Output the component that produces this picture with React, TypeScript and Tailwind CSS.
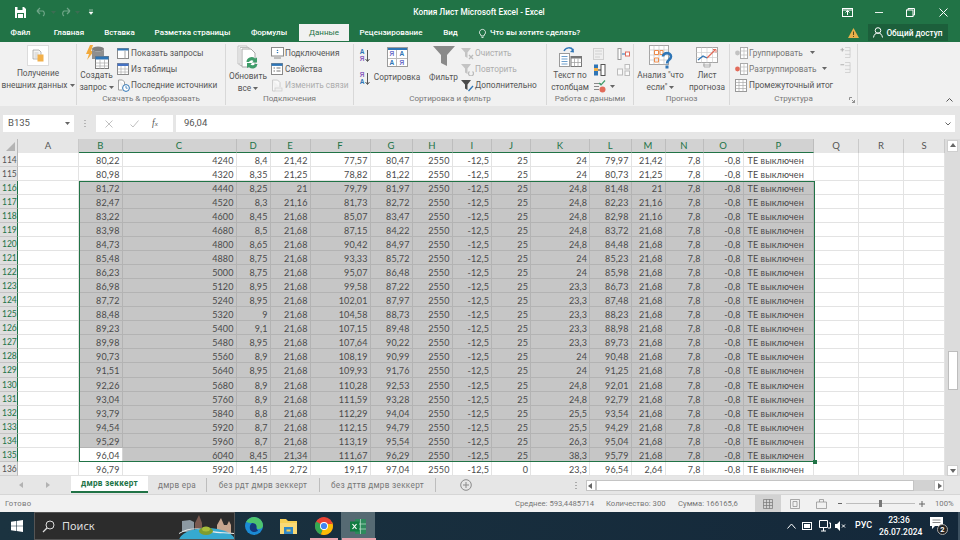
import React from "react";

const COLS = ["A","B","C","D","E","F","G","H","I","J","K","L","M","N","O","P","Q","R","S"];
const raw = `114 80,22 4240 8,4 21,42 77,57 80,47 24 79,97 21,42
115 80,98 4320 8,35 21,25 78,82 81,22 24 80,73 21,25
116 81,72 4440 8,25 21 79,79 81,97 24,8 81,48 21
117 82,47 4520 8,3 21,16 81,73 82,72 24,8 82,23 21,16
118 83,22 4600 8,45 21,68 85,07 83,47 24,8 82,98 21,16
119 83,98 4680 8,5 21,68 87,15 84,22 24,8 83,72 21,68
120 84,73 4800 8,65 21,68 90,42 84,97 24,8 84,48 21,68
121 85,48 4880 8,75 21,68 93,33 85,72 24 85,23 21,68
122 86,23 5000 8,75 21,68 95,07 86,48 24 85,98 21,68
123 86,98 5120 8,95 21,68 99,58 87,22 23,3 86,73 21,68
124 87,72 5240 8,95 21,68 102,01 87,97 23,3 87,48 21,68
125 88,48 5320 9 21,68 104,58 88,73 23,3 88,23 21,68
126 89,23 5400 9,1 21,68 107,15 89,48 23,3 88,98 21,68
127 89,98 5480 8,95 21,68 107,64 90,22 23,3 89,73 21,68
128 90,73 5560 8,9 21,68 108,19 90,99 24 90,48 21,68
129 91,51 5640 8,95 21,68 109,93 91,76 24 91,25 21,68
130 92,26 5680 8,9 21,68 110,28 92,53 24,8 92,01 21,68
131 93,04 5760 8,9 21,68 111,59 93,28 24,8 92,79 21,68
132 93,79 5840 8,8 21,68 112,29 94,04 25,5 93,54 21,68
133 94,54 5920 8,7 21,68 112,15 94,79 25,5 94,29 21,68
134 95,29 5960 8,7 21,68 113,19 95,54 26,3 95,04 21,68
135 96,04 6040 8,45 21,34 111,67 96,29 38,3 95,79 21,68
136 96,79 5920 1,45 2,72 19,17 97,04 23,3 96,54 2,64`;

const rows = raw.split("\n").map((l) => {
  const p = l.split(" ");
  const n = Number(p[0]);
  return {
    n,
    cells: ["", p[1], p[2], p[3], p[4], p[5], p[6], "2550", "-12,5", n === 136 ? "0" : "25", p[7], p[8], p[9], "7,8", "-0,8", "TE выключен", "", "", ""],
  };
});

const Cell = ({ text, sel, active, col }: { text: string; sel: boolean; active: boolean; col: string }) => (
  <div
    className={`overflow-hidden border-r border-b pr-[2px] text-[9px] leading-[15px] tracking-[0.1px] text-[#4a4a4a] [font-family:'Lato',sans-serif] ${col === "P" ? "pl-[4px] text-left whitespace-nowrap" : "text-right"} ${
      active ? "border-[#d4d4d4] bg-white" : sel ? "border-[#b3b3b3] bg-[#c6c6c6]" : "border-[#e3e3e3] bg-white"
    }`}
  >
    {text}
  </div>
);

function Sheet() {
  return (
    <div className="relative grid flex-1 grid-cols-[18px_61px_43.5px_114px_34px_40px_60px_42px_40px_39.5px_39px_59px_41.5px_34px_38px_40px_70.5px_45px_45px_41px] grid-rows-[14px] auto-rows-[14.04px]">
      <div className="flex items-end justify-end border-r border-[#b9b9b9] bg-[#e6e6e6] pr-[2px] pb-[2px]">
        <svg width="9" height="9" viewBox="0 0 9 9"><path d="M9 0v9H0z" fill="#b4b4b4" /></svg>
      </div>
      {COLS.map((c) => {
        const s = c !== "A" && c !== "Q" && c !== "R" && c !== "S";
        return (
          <div
            key={c}
            className={`border-r text-center text-[9.5px] leading-[14px] [font-family:'Lato',sans-serif] ${
              s ? "border-b border-r-[#bdbdbd] border-b-[#217346] bg-[#d2d2d2] text-[#217346]" : "border-r-[#c9c9c9] bg-[#e6e6e6] text-[#555]"
            }`}
          >
            {c}
          </div>
        );
      })}
      {rows.map((r) => {
        const sel = r.n >= 116 && r.n <= 135;
        return (
          <React.Fragment key={r.n}>
            <div
              className={`border-b border-r pl-[2px] text-[8.5px] leading-[15px] [font-family:'Lato',sans-serif] ${
                sel ? "border-b-[#c4c4c4] border-r-[#217346] bg-[#dedede] text-[#217346]" : "border-b-[#cfcfcf] border-r-[#b9b9b9] bg-[#e6e6e6] text-[#555]"
              }`}
            >
              {r.n}
            </div>
            {r.cells.map((t, i) => {
              const c = COLS[i];
              const inSel = sel && i >= 1 && i <= 15;
              return <Cell key={c} text={t} col={c} sel={inSel} active={r.n === 135 && c === "B"} />;
            })}
          </React.Fragment>
        );
      })}
      <div className="pointer-events-none absolute top-[41.5px] left-[78.6px] h-[281.5px] w-[736px] border-[1.5px] border-[#217346]" />
      <div className="pointer-events-none absolute top-[321px] left-[812.5px] h-[4px] w-[4px] bg-[#217346]" />
    </div>
  );
}

const Arrow = ({ dir }: { dir: "up" | "down" | "left" | "right" }) => {
  const d = { up: "M1 5l3-4 3 4z", down: "M1 2l3 4 3-4z", left: "M5 1L1 4l4 3z", right: "M3 1l4 3-4 3z" }[dir];
  return <svg width="8" height="8" viewBox="0 0 8 8"><path d={d} fill="#666" /></svg>;
};

function VScroll() {
  return (
    <div className="flex w-[15px] flex-col items-center bg-[#dcdcdc]">
      <div className="mt-[1px] flex h-[12px] w-[11px] items-center justify-center border border-[#cfcfcf] bg-white"><Arrow dir="up" /></div>
      <div className="mt-[199px] h-[39px] w-[10px] border border-[#bdbdbd] bg-white" />
      <div className="mt-[75px] flex h-[11px] w-[11px] items-center justify-center border border-[#cfcfcf] bg-white"><Arrow dir="down" /></div>
    </div>
  );
}

const f = "[font-family:'Roboto',sans-serif]";

const Caret = () => <svg className="inline-block align-middle" width="5" height="3" viewBox="0 0 5 3"><path d="M0 0h5L2.500 3z" fill="#666" /></svg>;

function Big({ icon, lines, w, caret }: { icon: React.ReactNode; lines: string[]; w: string; caret?: boolean }) {
  return (
    <div className={`flex flex-col items-center ${w}`}>
      <div className="flex h-[27px] items-center justify-center">{icon}</div>
      <div className={`mt-[1px] text-center text-[8.3px] leading-[11.5px] whitespace-nowrap text-[#555] ${f}`}>
        {lines.map((l, i) => (
          <div key={i}>{l}{caret && i === lines.length - 1 ? <span className="ml-[2px]"><Caret /></span> : null}</div>
        ))}
      </div>
    </div>
  );
}

function SmallRow({ icon, text, muted, soft }: { icon: React.ReactNode; text: string; muted?: boolean; soft?: boolean }) {
  return (
    <div className="flex h-[16.3px] items-center gap-[1px]">
      <span className="flex w-[14px] shrink-0 justify-center">{icon}</span>
      <span className={`text-[8.3px] whitespace-nowrap ${muted ? "text-[#adadad]" : soft ? "text-[#777]" : "text-[#555]"} ${f}`}>{text}</span>
    </div>
  );
}

function Group({ w, label, children, launcher }: { w: string; label: string; children: React.ReactNode; launcher?: boolean }) {
  return (
    <div className={`relative flex h-[61px] shrink-0 flex-col border-r border-[#d8d8d8] ${w}`}>
      <div className="flex h-[49px] flex-1">{children}</div>
      <div className={`h-[12px] text-center text-[8.1px] leading-[11px] whitespace-nowrap text-[#777] ${f}`}>{label}</div>
      {launcher && (
        <svg className="absolute right-[2px] bottom-[2px]" width="6" height="6" viewBox="0 0 6 6"><path d="M.5 3V.5H3M3 3l2.500 2.500M5.500 3v2.500H3" stroke="#777" fill="none" strokeWidth=".8" /></svg>
      )}
    </div>
  );
}

const TableIco = ({ head = "#2e75b6" }: { head?: string }) => (
  <svg width="12" height="12" viewBox="0 0 12 12"><rect x=".5" y=".5" width="11" height="11" fill="#fff" stroke="#8a8a8a" /><rect x=".5" y=".5" width="11" height="2.500" fill={head} /><path d="M.5 6h11M.5 9h11M4 3v8M8 3v8" stroke="#a5a5a5" strokeWidth=".6" /></svg>
);
const WinIco = () => (
  <svg width="12" height="11" viewBox="0 0 12 11"><rect x=".5" y=".5" width="11" height="10" fill="#fff" stroke="#8a8a8a" /><rect x=".5" y=".5" width="11" height="2" fill="#2e75b6" /><path d="M8 2.500v8" stroke="#a5a5a5" /></svg>
);
const RecentIco = () => (
  <svg width="13" height="13" viewBox="0 0 13 13"><path d="M1.500 1h4l2 2v3M1.500 1v10h4" fill="#fff" stroke="#8a8a8a" strokeWidth=".8" /><circle cx="9" cy="9" r="3.400" fill="#fff" stroke="#2e75b6" /><path d="M9 7v2.200h1.600" stroke="#2e75b6" fill="none" strokeWidth=".8" /></svg>
);
const ConnIco = () => (
  <svg width="13" height="12" viewBox="0 0 13 12"><rect x=".5" y=".5" width="12" height="8.500" fill="#fff" stroke="#8a8a8a" /><path d="M6.500 2.500l1 1.500h-2zM5.500 5l1 1.500 1-1.500" fill="#2e75b6" /><path d="M3 11h7" stroke="#8a8a8a" /></svg>
);
const PropIco = () => (
  <svg width="12" height="12" viewBox="0 0 12 12"><rect x=".5" y=".5" width="11" height="11" fill="#fff" stroke="#8a8a8a" /><rect x=".5" y=".5" width="11" height="2.400" fill="#2e75b6" /><path d="M2.500 5h1.500M5.500 5h4M2.500 8h1.500M5.500 8h4" stroke="#777" /></svg>
);
const LinkIco = () => (
  <svg width="12" height="13" viewBox="0 0 12 13" opacity=".5"><path d="M1.500 1h5l2.500 2.500V8M1.500 1v11H4" fill="#fff" stroke="#aaa" /><rect x="4" y="9" width="7" height="3" fill="#eee" stroke="#aaa" strokeWidth=".7" /></svg>
);

const SmallFunnel = ({ extra, dark }: { extra?: string; dark?: boolean }) => (
  <svg width="13" height="13" viewBox="0 0 13 13">
    <path d="M0 1h10L6.500 5.500V11L4 9.500V5.500z" fill={dark ? "#4a4a4a" : "#c4c4c4"} />
    {extra && <path d={extra} stroke={dark ? "#2e75b6" : "#bbb"} strokeWidth="1.300" fill="none" />}
  </svg>
);

const SortIco = ({ a, b, up }: { a: string; b: string; up?: boolean }) => (
  <div className="flex items-center gap-[1px]">
    <div className="text-center text-[6.5px] leading-[6.5px] font-bold [font-family:'Liberation_Sans',sans-serif]">
      <div className={up ? "text-[#2e75b6]" : "text-[#8a5fc0]"}>{a}</div>
      <div className={up ? "text-[#8a5fc0]" : "text-[#2e75b6]"}>{b}</div>
    </div>
    <svg width="5" height="12" viewBox="0 0 5 12"><path d="M2.500 0v11M.5 9l2 2.500 2-2.500" stroke="#555" fill="none" /></svg>
  </div>
);
const GroupIco = ({ color }: { color: string }) => (
  <svg width="13" height="12" viewBox="0 0 13 12"><circle cx="2.500" cy="6" r="2.400" fill={color} /><rect x="5.500" y=".5" width="7" height="11" fill="#fff" stroke="#aaa" /><path d="M5.500 4h7M5.500 8h7M9 .5v11" stroke="#bbb" strokeWidth=".7" /></svg>
);
const SubIco = () => (
  <svg width="12" height="13" viewBox="0 0 12 13"><rect x=".5" y=".5" width="11" height="12" fill="#fff" stroke="#999" /><path d="M.5 3.500h11M.5 6.500h11M.5 9.500h11M4 .5v12M8 .5v12" stroke="#aaa" strokeWidth=".7" /></svg>
);
const OutlineIco = ({ sign }: { sign: string }) => (
  <svg width="11" height="11" viewBox="0 0 11 12"><path d="M5 .5h5.500v11H5M5 4h5.500M5 8h5.500" stroke="#c8c8c8" fill="none" strokeWidth=".8" />{sign === "+" ? <path d="M0 3h4M2 1v4" stroke="#aaa" /> : <path d="M0 3h4" stroke="#aaa" />}</svg>
);

function Ribbon() {
  return (
    <div className="flex h-[65px] shrink-0 border-t border-[#217346] bg-[#f1f1f1] pt-[2px]">
      <Group w="w-[77px]" label="">
        <div className="flex w-full flex-col items-center">
          <div className="mt-[1px] flex h-[21px] w-[22px] items-center justify-center border border-[#dcdcdc] bg-white">
            <svg width="12" height="13" viewBox="0 0 12 13"><path d="M1 1h6l2 2v7H1z" fill="#f4f4f4" stroke="#9a9a9a" strokeWidth=".7" /><path d="M2.500 4h4M2.500 6h4M2.500 8h3" stroke="#bbb" strokeWidth=".7" /><rect x="5.500" y="5.500" width="6" height="7" fill="#f2b04a" /></svg>
          </div>
          <div className={`mt-[2px] text-center text-[8.3px] leading-[11.5px] whitespace-nowrap text-[#555] ${f}`}>
            <div>Получение</div>
            <div>внешних данных <Caret /></div>
          </div>
        </div>
      </Group>
      <Group w="w-[149px]" label="Скачать & преобразовать">
        <Big
          w="w-[39px] pt-[1px]"
          caret
          lines={["Создать", "запрос"]}
          icon={
            <svg width="24" height="24" viewBox="0 0 24 24">
              <path d="M5 0L1 9h3l-2 6 7-9H6l2-6z" fill="#f2a93b" />
              <ellipse cx="13" cy="4" rx="6" ry="2.500" fill="#7f7f7f" />
              <path d="M7 4v10h12V4a6 2.500 0 0 1-12 0z" fill="#8f8f8f" />
              <rect x="10.500" y="11.500" width="13" height="12" fill="#fff" stroke="#7a7a7a" />
              <rect x="10.500" y="11.500" width="13" height="3" fill="#2e75b6" />
              <path d="M10.500 18h13M10.500 21h13M15 14v10M19.500 14v10" stroke="#aaa" strokeWidth=".7" />
            </svg>
          }
        />
        <div className="flex flex-col pt-[1px]">
          <SmallRow icon={<WinIco />} text="Показать запросы" />
          <SmallRow icon={<TableIco head="#4472c4" />} text="Из таблицы" />
          <SmallRow icon={<RecentIco />} text="Последние источники" />
        </div>
      </Group>
      <Group w="w-[128px]" label="Подключения">
        <Big
          w="w-[44px] pt-[1px]"
          caret
          lines={["Обновить", "все"]}
          icon={
            <svg width="24" height="25" viewBox="0 0 24 25">
              <path d="M2 1h9v18H2z" fill="#fff" stroke="#c0c0c0" />
              <path d="M4 2.500h9v18H4z" fill="#fff" stroke="#c0c0c0" />
              <path d="M6 4h9l4 4v14H6z" fill="#fff" stroke="#a8a8a8" />
              <path d="M10.500 17a5 5 0 0 1 8.500-3.500l2-1v5h-5l1.500-1.500a3 3 0 0 0-4.500 1zM21.500 19a5 5 0 0 1-8.500 3l-2 1v-5h5l-1.500 1.500a3 3 0 0 0 4.500-.5z" fill="#3f9d6a" />
            </svg>
          }
        />
        <div className="flex flex-col pt-[1px]">
          <SmallRow icon={<ConnIco />} text="Подключения" />
          <SmallRow icon={<PropIco />} text="Свойства" />
          <SmallRow icon={<LinkIco />} text="Изменить связи" muted />
        </div>
      </Group>
      <Group w="w-[193px]" label="Сортировка и фильтр">
        <div className="flex w-[20px] flex-col items-center gap-[10px] pt-[5px] pl-[2px]">
          <SortIco a="А" b="Я" up />
          <SortIco a="Я" b="А" />
        </div>
        <div className="flex w-[46px] flex-col items-center pt-[3px]">
          <div className="w-[21px] border border-[#9b9b9b] bg-white">
            <div className="h-[2px] bg-[#2e75b6]" />
            <div className="grid grid-cols-2 text-center text-[6.5px] leading-[7.5px] font-bold text-[#6d6fc9] [font-family:'Liberation_Sans',sans-serif]">
              <span className="border-r border-b border-[#bbb]">Я</span><span className="border-b border-[#bbb] text-[#2e75b6]">А</span>
              <span className="border-r border-[#bbb] text-[#2e75b6]">А</span><span>Я</span>
            </div>
          </div>
          <div className={`mt-[5px] text-[8.3px] leading-[11px] text-[#555] ${f}`}>Сортировка</div>
        </div>
        <div className="ml-[7px] flex w-[33px] flex-col items-center pt-[2px]">
          <svg width="22" height="20" viewBox="0 0 22 20"><path d="M0 0h22l-8 9v11l-6-3V9z" fill="#8a8a8a" /></svg>
          <div className={`mt-[6px] text-[8.3px] leading-[11px] text-[#555] ${f}`}>Фильтр</div>
        </div>
        <div className="flex flex-col pt-[1px]">
          <SmallRow icon={<SmallFunnel extra="M8 8l4 4M12 8l-4 4" />} text="Очистить" muted />
          <SmallRow icon={<SmallFunnel extra="M8.500 8.500a2.500 2.500 0 1 0 3 0" />} text="Повторить" muted />
          <SmallRow icon={<SmallFunnel dark extra="M7.500 12l4.500-5" />} text="Дополнительно" />
        </div>
      </Group>
      <Group w="w-[87px]" label="Работа с данными">
        <Big
          w="w-[46px] pt-[1px]"
          lines={["Текст по", "столбцам"]}
          icon={
            <svg width="23" height="20" viewBox="0 0 23 20">
              <path d="M5 4c2-4 7-4 9-1" stroke="#2e75b6" strokeWidth="1.500" fill="none" />
              <path d="M11 5l4 .5-.5-4z" fill="#2e75b6" />
              <rect x=".5" y="6.500" width="10" height="13" fill="#fff" stroke="#9a9a9a" />
              <path d="M2.500 9.500h6M2.500 12h6M2.500 14.500h6M2.500 17h6" stroke="#2e75b6" strokeWidth=".7" />
              <rect x="12" y="9.500" width="10.500" height="10" fill="#fff" stroke="#777" />
              <rect x="12" y="9.500" width="10.500" height="2" fill="#777" />
              <path d="M15.500 11.500v8M19 11.500v8M12 15.500h10.500" stroke="#999" strokeWidth=".7" />
            </svg>
          }
        />
        <div className="flex w-[40px] flex-wrap content-start gap-x-[11px] gap-y-[4px] pt-[4px]">
          <svg width="13" height="12" viewBox="0 0 13 12" opacity=".45"><rect x=".5" y=".5" width="10" height="11" fill="#eee" stroke="#aaa" /><path d="M2 3h7M2 6h7M2 9h5" stroke="#aaa" /></svg>
          <svg width="13" height="12" viewBox="0 0 13 12"><rect x="1" y=".5" width="3" height="11" fill="#fff" stroke="#999" /><path d="M5 6h3" stroke="#2e75b6" /><rect x="8.500" y="4" width="4" height="4" fill="#fff" stroke="#e26b5a" /></svg>
          <svg width="13" height="12" viewBox="0 0 13 12"><rect x="1" y=".5" width="4" height="11" fill="#2e75b6" /><rect x="1" y="4" width="4" height="3" fill="#f2b04a" /><rect x="8" y=".5" width="4" height="11" fill="#fff" stroke="#555" /><path d="M5 6h3" stroke="#333" /></svg>
          <svg width="13" height="12" viewBox="0 0 13 12" opacity=".6"><rect x=".5" y="5" width="5" height="6" fill="#fff" stroke="#999" /><rect x="8" y=".5" width="4.500" height="4.500" fill="#fff" stroke="#999" /><rect x="8" y="7" width="4.500" height="4.500" fill="#fff" stroke="#999" /></svg>
          <span className="flex items-center gap-[4px]">
            <svg width="13" height="13" viewBox="0 0 13 13"><path d="M1 3.500h7M1 6.500h5M1 9.500h5" stroke="#888" /><path d="M6 3l2 2 4-4.500" stroke="#3f9d6a" fill="none" strokeWidth="1.200" /><circle cx="9.500" cy="9.500" r="3" fill="#e26b5a" /></svg>
            <Caret />
          </span>
        </div>
      </Group>
      <Group w="w-[96px]" label="Прогноз">
        <Big
          w="w-[53px] pt-[1px]"
          caret
          lines={['Анализ "что', 'если"']}
          icon={
            <svg width="24" height="24" viewBox="0 0 24 24">
              <rect x=".5" y=".5" width="19" height="19" fill="#fff" stroke="#a5a5a5" />
              <path d="M5 .5v19M10 .5v19M15 .5v19M.5 5h19M.5 10h19M.5 15h19" stroke="#c4c4c4" strokeWidth=".7" />
              <path d="M5.500 5.500h4v4h-4zM5.500 13h4v4h-4zM11 5.500h3v4h-3z" fill="none" stroke="#ed8b4a" />
              <path d="M14 11.500c0-4.500 8-4.500 8 0 0 3.500-4 3-4 7" fill="none" stroke="#2e75b6" strokeWidth="2.600" />
              <rect x="16.500" y="20.500" width="3" height="3" fill="#2e75b6" />
            </svg>
          }
        />
        <Big
          w="w-[40px] pt-[1px]"
          lines={["Лист", "прогноза"]}
          icon={
            <svg width="22" height="21" viewBox="0 0 22 21">
              <rect x=".5" y=".5" width="21" height="15" fill="#fff" stroke="#a5a5a5" />
              <path d="M.5 5.500h21M.5 10.500h21M5.500.5v15M11 .5v15M16.500.5v15" stroke="#d0d0d0" strokeWidth=".7" />
              <path d="M2 13l5-4 4 2" stroke="#2e75b6" strokeWidth="1.300" fill="none" />
              <path d="M11 11l4-4 4-4" stroke="#e26b5a" strokeWidth="1.300" fill="none" />
              <path d="M17 2.500h3v3" stroke="#e26b5a" fill="none" />
              <path d="M7 18h8M8 16v4h6v-4" stroke="#999" fill="none" strokeWidth=".7" />
            </svg>
          }
        />
      </Group>
      <Group w="w-[128px]" label="Структура" launcher>
        <div className="flex flex-col pt-[1px] pl-[4px]">
          <SmallRow icon={<GroupIco color="#c2c2c2" />} text="Группировать" soft />
          <SmallRow icon={<GroupIco color="#e26b5a" />} text="Разгруппировать" soft />
          <SmallRow icon={<SubIco />} text="Промежуточный итог" />
        </div>
        <div className="absolute top-[3px] right-[6px] flex flex-col gap-[4px]">
          <OutlineIco sign="+" />
          <OutlineIco sign="-" />
        </div>
        <span className="absolute top-[7px] left-[80px] flex"><Caret /></span>
        <span className="absolute top-[23px] left-[92px] flex"><Caret /></span>
      </Group>
      <div className="relative flex-1">
        <svg className="absolute right-[7px] bottom-[4px]" width="7" height="4" viewBox="0 0 7 4"><path d="M.5 3.500l3-3 3 3" stroke="#555" fill="none" /></svg>
      </div>
    </div>
  );
}

function TitleBar() {
  const tabs: [string, string][] = [
    ["Файл", "w-[41px]"], ["Главная", "w-[56px]"], ["Вставка", "w-[45px]"], ["Разметка страницы", "w-[101px]"], ["Формулы", "w-[52px] mr-[4px]"],
  ];
  return (
    <div className={`shrink-0 bg-[#217346] text-white ${f}`}>
      <div className="flex h-[24px] items-center">
        <div className="flex w-[334px] items-center pl-[15px]">
          <svg width="11" height="11" viewBox="0 0 11 11"><path d="M0 0h9l2 2v9H0z" fill="#fff" /><rect x="2.500" y="0" width="5" height="3" fill="#217346" /><rect x="2" y="6" width="7" height="5" fill="#217346" /><rect x="3" y="7" width="5" height="4" fill="#fff" /></svg>
          <svg className="ml-[10px]" width="11" height="10" viewBox="0 0 11 10" opacity=".45"><path d="M1 4l3-3M1 4l3 3M1 4h6a3 3 0 0 1 0 5" stroke="#cfe3d8" strokeWidth="1.200" fill="none" /></svg>
          <span className="ml-[4px] opacity-40"><Caret /></span>
          <svg className="ml-[4px]" width="11" height="10" viewBox="0 0 11 10" opacity=".45"><path d="M10 4L7 1M10 4L7 7M10 4H4a3 3 0 0 0 0 5" stroke="#cfe3d8" strokeWidth="1.200" fill="none" /></svg>
          <span className="ml-[4px] opacity-40"><Caret /></span>
          <svg className="ml-[8px]" width="6" height="6" viewBox="0 0 6 6"><path d="M1 1h4M1 3h4L3 5.500z" fill="#fff" stroke="#fff" strokeWidth=".5" /></svg>
        </div>
        <div className="w-[290px] text-center text-[8.3px] leading-[24px] font-medium whitespace-nowrap">Копия Лист Microsoft Excel - Excel</div>
        <div className="flex flex-1 items-center justify-end">
          <svg width="11" height="9" viewBox="0 0 11 9"><rect x=".5" y=".5" width="10" height="8" fill="none" stroke="#fff" /><path d="M5.500 7V3M3.500 4.500l2-2 2 2" stroke="#fff" fill="none" /><path d="M.5 2h10" stroke="#fff" /></svg>
          <span className="ml-[22px] h-[1px] w-[8px] bg-white/90" />
          <svg className="ml-[23px]" width="9" height="9" viewBox="0 0 9 9"><rect x=".5" y="2" width="6.500" height="6.500" fill="none" stroke="#fff" /><path d="M2 2V.5h6.500V7H7" stroke="#fff" fill="none" /></svg>
          <svg className="mr-[12px] ml-[24px]" width="9" height="9" viewBox="0 0 9 9"><path d="M.5.500l8 8M8.500.500l-8 8" stroke="#fff" /></svg>
        </div>
      </div>
      <div className="flex h-[17px] items-stretch text-[8px] leading-[18px] font-medium whitespace-nowrap">
        {tabs.map(([t, w]) => (
          <div key={t} className={`text-center ${w}`}>{t}</div>
        ))}
        <div className="w-[50px] bg-[#f1f1f1] text-center font-normal text-[#217346]">Данные</div>
        <div className="w-[84px] text-center">Рецензирование</div>
        <div className="w-[35px] text-center">Вид</div>
        <div className="ml-[11px] flex items-center gap-[4px]">
          <svg width="7" height="10" viewBox="0 0 7 10"><path d="M2 7a3 3 0 1 1 3 0v1H2zM2.500 9.500h2" stroke="#fff" fill="none" strokeWidth=".8" /></svg>
          <span>Что вы хотите сделать?</span>
        </div>
        <div className="flex flex-1 items-center justify-end">
          <svg width="11" height="10" viewBox="0 0 11 10"><path d="M5.500 0L11 10H0z" fill="#e8b04a" /><path d="M5.500 3.500v3.500M5.500 8v1" stroke="#5a4a1a" /></svg>
          <div className="mr-[12px] ml-[9px] flex h-[17px] w-[80px] items-center justify-center gap-[3px] bg-[#1c5f3b] text-[8.3px]">
            <svg width="10" height="11" viewBox="0 0 10 11"><circle cx="5" cy="3.500" r="2.800" fill="none" stroke="#fff" /><path d="M.5 10.500c.5-3 2-4.500 4.500-4.500s4 1.500 4.500 4.500" stroke="#fff" fill="none" /></svg>
            <span>Общий доступ</span>
          </div>
        </div>
      </div>
    </div>
  );
}

function FormulaBar() {
  return (
    <div className={`flex h-[33px] shrink-0 items-start bg-[#e6e6e6] pt-[9px] text-[9.5px] text-[#555] ${f}`}>
      <div className="ml-[3px] flex h-[17px] w-[71px] items-center justify-between bg-white pr-[4px] pl-[5px]">
        <span>B135</span><Caret />
      </div>
      <div className="flex w-[22px] flex-col items-center gap-[2px] pt-[5px]">
        <i className="h-[1px] w-[2px] bg-[#b5b5b5]" /><i className="h-[1px] w-[2px] bg-[#b5b5b5]" /><i className="h-[1px] w-[2px] bg-[#b5b5b5]" />
      </div>
      <div className="flex h-[17px] w-[77px] items-center bg-white pl-[9px]">
        <svg width="8" height="8" viewBox="0 0 8 8"><path d="M.5.500l7 7M7.500.500l-7 7" stroke="#c0c0c0" /></svg>
        <svg className="ml-[17px]" width="9" height="8" viewBox="0 0 9 8"><path d="M.5 4.500L3 7l5.500-6.500" stroke="#c0c0c0" fill="none" /></svg>
        <span className="ml-[13px] text-[9.5px] text-[#555] italic [font-family:'Liberation_Serif',serif]">f<span className="text-[7px]">x</span></span>
      </div>
      <div className="ml-[3px] flex h-[17px] w-[779px] items-center justify-between bg-white pr-[4px] pl-[8px]">
        <span>96,04</span>
        <svg width="6" height="4" viewBox="0 0 6 4"><path d="M.5.500l2.500 2.500 2.500-2.500" stroke="#666" fill="none" /></svg>
      </div>
    </div>
  );
}

function SheetTabs() {
  return (
    <div className={`flex h-[18px] shrink-0 items-start bg-[#e6e6e6] text-[8.2px] tracking-[0.3px] text-[#777] ${f}`}>
      <div className="flex w-[71px] gap-[17px] pt-[5px] pl-[18px] opacity-40"><Arrow dir="left" /><Arrow dir="right" /></div>
      <div className="flex h-[17px] w-[77px] items-center justify-center border-b-2 border-[#217346] bg-white font-bold text-[#217346]">дмрв зеккерт</div>
      <div className="flex h-[14px] w-[59px] translate-y-[2px] items-center justify-center border-r border-[#bdbdbd]">дмрв ера</div>
      <div className="flex h-[14px] w-[113px] translate-y-[2px] items-center justify-center border-r border-[#bdbdbd]">без рдт дмрв зеккерт</div>
      <div className="flex h-[14px] w-[116px] translate-y-[2px] items-center justify-center border-r border-[#bdbdbd]">без дттв дмрв зеккерт</div>
      <div className="ml-[24px] flex h-[18px] items-center">
        <svg width="12" height="12" viewBox="0 0 12 12"><circle cx="6" cy="6" r="5.300" fill="none" stroke="#8a8a8a" /><path d="M6 3v6M3 6h6" stroke="#8a8a8a" /></svg>
      </div>
      <div className="ml-[103px] flex h-[18px] flex-col items-center justify-center gap-[2px]">
        <i className="h-[1px] w-[2px] bg-[#aaa]" /><i className="h-[1px] w-[2px] bg-[#aaa]" /><i className="h-[1px] w-[2px] bg-[#aaa]" />
      </div>
      <div className="mt-[4px] ml-[9px] flex h-[11px] w-[358px] bg-[#d2d2d2]">
        <div className="flex w-[10px] items-center justify-center border border-[#c4c4c4] bg-white"><Arrow dir="left" /></div>
        <div className="w-[318px] border border-[#c4c4c4] bg-white" />
        <div className="flex-1" />
        <div className="flex w-[10px] items-center justify-center border border-[#c4c4c4] bg-white"><Arrow dir="right" /></div>
      </div>
    </div>
  );
}

function StatusBar() {
  return (
    <div className={`flex h-[18px] shrink-0 items-center border-t border-[#d6d6d6] bg-[#f1f1f1] text-[7.7px] whitespace-nowrap text-[#777] ${f}`}>
      <span className="ml-[5px] w-[510px] tracking-[0.3px]">Готово</span>
      <span className="w-[91px]">Среднее: 593,4485714</span>
      <span className="w-[72px]">Количество: 300</span>
      <span className="w-[77px]">Сумма: 166165,6</span>
      <div className="flex h-[18px] w-[26px] items-center justify-center bg-[#d2d2d2]">
        <svg width="10" height="10" viewBox="0 0 10 10"><path d="M.5.500h9v9h-9zM3.500.500v9M6.500.500v9M.5 3.500h9M.5 6.500h9" stroke="#777" fill="none" strokeWidth=".7" /></svg>
      </div>
      <div className="flex w-[28px] items-center justify-center">
        <svg width="10" height="10" viewBox="0 0 10 10"><path d="M.5.500h9v9h-9zM3 2.500h4v5H3z" stroke="#888" fill="none" strokeWidth=".7" /></svg>
      </div>
      <div className="flex w-[24px] items-center justify-center">
        <svg width="11" height="10" viewBox="0 0 11 10"><path d="M.5 3h10v6.500H.5zM3.500 3V.5h4V3" stroke="#888" fill="none" strokeWidth=".7" /></svg>
      </div>
      <div className="ml-[5px] flex w-[87px] items-center">
        <span className="h-[1px] w-[4px] bg-[#666]" />
        <div className="relative mx-[4px] h-[1px] flex-1 bg-[#bdbdbd]">
          <span className="absolute -top-[3px] left-[33px] h-[7px] w-[3px] bg-[#777]" />
        </div>
        <svg width="6" height="6" viewBox="0 0 6 6"><path d="M3 0v6M0 3h6" stroke="#666" /></svg>
      </div>
      <span className="ml-[10px]">100%</span>
    </div>
  );
}

function Taskbar() {
  return (
    <div className="relative flex h-[28px] shrink-0 items-stretch bg-linear-to-r from-[#1b3340] to-[#14283a] text-white">
      <div className="flex w-[34px] items-center justify-center">
        <svg width="12" height="12" viewBox="0 0 12 12"><path d="M0 1.700L5 1v4.700H0zM5.600.900L12 0v5.700H5.600zM0 6.300h5V11l-5-.7zM5.600 6.300H12V12l-6.400-.9z" fill="#fff" /></svg>
      </div>
      <div className="relative flex w-[201px] items-center overflow-hidden border border-[#555] bg-[#2c2c2c] pl-[7px]">
        <svg width="13" height="13" viewBox="0 0 13 13"><circle cx="8" cy="5" r="4" fill="none" stroke="#ddd" /><path d="M5 8l-4 4" stroke="#ddd" strokeWidth="1.200" /></svg>
        <span className="ml-[7px] text-[11px] text-[#ddd] [font-family:'Noto_Sans',sans-serif]">Поиск</span>
        <svg className="absolute top-0 right-0" width="55" height="28" viewBox="0 0 55 28">
          <path d="M3 8l8-1 4 2v10H3z" fill="#8d9aa3" />
          <path d="M16 10l4-8 3 8v8h-7z" fill="#7b5a50" />
          <path d="M38 12l4-7 3 7h3l2-4 2 4v8H38z" fill="#c7a58e" />
          <ellipse cx="28" cy="28" rx="28" ry="13" fill="#36a9d0" />
          <path d="M0 21c10-6 20-6 28-3s18 2 27 3v-1c-10-1-18-1-27-3S9 14 0 20z" fill="#e7ecec" />
          <ellipse cx="27" cy="18" rx="7" ry="4" fill="#7f9c2d" />
          <ellipse cx="27" cy="16" rx="4" ry="2.500" fill="#a8bd3a" />
        </svg>
      </div>
      <div className="flex w-[36px] items-center justify-center">
        <svg className="ml-[2px]" width="18" height="18" viewBox="0 0 18 18">
          <circle cx="9" cy="9" r="9" fill="#1b8ad4" />
          <path d="M1 5C3 1.500 6 0 9 0c5 0 9 4 9 8.500 0 2.500-2 3.500-4 3.500-1.500 0-2.500-.5-2.500-1.500C11.500 8 9.500 6 7 6 4.500 6 2.500 5.500 1 5z" fill="#4ec46e" />
          <path d="M7 6c3 0 5 2 4.500 4.500-.3 1.500 1 2 1.500 3-1.500 1.500-4 2-6 1C4 13 4 8 7 6z" fill="#14397a" />
        </svg>
      </div>
      <div className="flex w-[35px] items-center justify-center">
        <svg width="17" height="15" viewBox="0 0 17 15"><path d="M0 0h6l2 2h9v13H0z" fill="#f6cf54" /><path d="M0 4h17v11H0z" fill="#f9d976" /><rect x="4" y="8" width="9" height="7" fill="#2f88c7" /><rect x="6.500" y="10.500" width="4" height="2" fill="#f6cf54" /></svg>
      </div>
      <div className="flex w-[35px] items-center justify-center">
        <svg width="18" height="18" viewBox="0 0 18 18"><circle cx="9" cy="9" r="9" fill="#ea4335" /><path d="M9 9L1.200 4.500A9 9 0 0 0 6 17.500z" fill="#34a853" /><path d="M9 9l-3 8.500A9 9 0 0 0 17.900 8L17 5z" fill="#fbbc05" /><path d="M9 5a4 4 0 0 1 3.500 2H17.300A9 9 0 0 0 1.200 4.500z" fill="#ea4335" /><circle cx="9" cy="9" r="4" fill="#fff" /><circle cx="9" cy="9" r="3.100" fill="#4285f4" /></svg>
      </div>
      <div className="flex w-[34px] items-center justify-center bg-[#566a73]">
        <svg width="16" height="15" viewBox="0 0 16 15"><rect x="5" y="0" width="11" height="15" rx="1" fill="#2e8a5c" /><path d="M10.500 0v15M5 5h11M5 10h11" stroke="#bfe1cd" strokeWidth=".7" /><rect x="0" y="2.500" width="9" height="10" fill="#107c41" /><path d="M2.500 5l4 5M6.500 5l-4 5" stroke="#fff" strokeWidth="1.200" /></svg>
      </div>
      <div className={`flex flex-1 items-center justify-end text-[9px] ${f}`}>
        <svg width="9" height="6" viewBox="0 0 9 6"><path d="M.5 5.500L4.500 1l4 4.500" stroke="#fff" fill="none" /></svg>
        <svg className="ml-[6px]" width="11" height="8" viewBox="0 0 11 8"><rect x=".5" y=".5" width="9" height="7" fill="none" stroke="#fff" /><rect x="2" y="2" width="6" height="4" fill="#fff" /></svg>
        <svg className="ml-[6px]" width="12" height="12" viewBox="0 0 12 12"><path d="M.5.500h8v7h-8zM4.500 7.500V11M2 11h5" stroke="#fff" fill="none" /><path d="M10 3h1.500v5H9" stroke="#fff" fill="none" /></svg>
        <svg className="ml-[4px]" width="11" height="10" viewBox="0 0 11 10"><path d="M0 3h2l3-3v10L2 7H0z" fill="#fff" /><path d="M7 3.500l3 3M10 3.500l-3 3" stroke="#fff" /></svg>
        <span className="ml-[9px] w-[16px] font-medium whitespace-nowrap">РУС</span>
        <div className="ml-[8px] w-[40px] text-center text-[8.5px] leading-[12px] font-medium">
          <div>23:36</div>
          <div>26.07.2024</div>
        </div>
        <div className="relative mr-[10px] ml-[11px] h-[18px] w-[18px]">
          <svg width="14" height="13" viewBox="0 0 14 13"><path d="M0 0h13v9H5l-3 3V9H0z" fill="#fff" /><path d="M2.500 3h8M2.500 5.500h8" stroke="#888" /></svg>
          <span className="absolute right-0 bottom-0 flex h-[11px] w-[11px] items-center justify-center rounded-full border border-[#aaa] bg-[#222] text-[7.5px] font-bold">2</span>
        </div>
        <div className="h-full w-[2px] bg-[#3c5060]" />
      </div>
      <span className="absolute bottom-0 left-[310px] h-[2px] w-[28px] bg-[#e8a3ad]" />
      <span className="absolute bottom-0 left-[342px] h-[2px] w-[34px] bg-[#e8a3ad]" />
    </div>
  );
}

export default function App() {
  return (
    <div className="flex h-[540px] w-[960px] flex-col overflow-hidden bg-[#e6e6e6]">
      <TitleBar />
      <Ribbon />
      <FormulaBar />
      <div className="flex h-[337px] shrink-0 overflow-hidden">
        <Sheet />
        <VScroll />
      </div>
      <SheetTabs />
      <StatusBar />
      <Taskbar />
    </div>
  );
}
